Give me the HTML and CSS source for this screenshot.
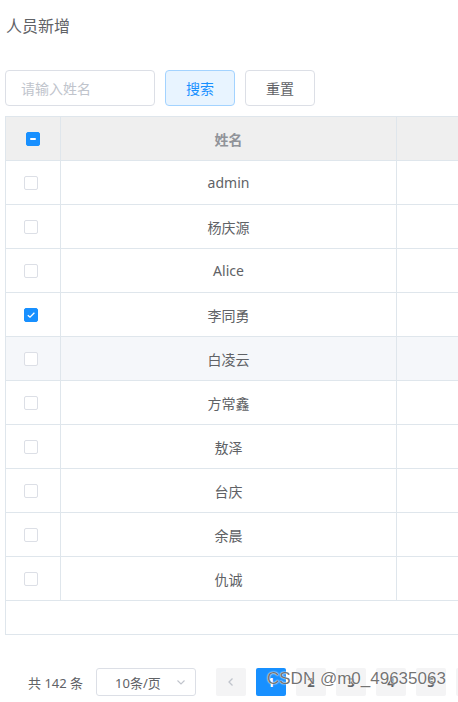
FILE: index.html
```html
<!DOCTYPE html>
<html lang="zh">
<head>
<meta charset="utf-8">
<title>人员新增</title>
<link rel="stylesheet" href="styles.css">
</head>
<body>
<div class="page">
  <div class="title">人员新增</div>
  <div class="search">
    <input class="input" type="text" placeholder="请输入姓名">
    <button class="btn btn-primary">搜索</button>
    <button class="btn">重置</button>
  </div>
  <div class="table">
    <div class="row head">
      <div class="cell c1"><span class="cb cb-ind"></span></div>
      <div class="cell c2">姓名</div>
      <div class="cell c3"></div>
    </div>
    <div class="row"><div class="cell c1"><span class="cb"></span></div><div class="cell c2">admin</div><div class="cell c3"></div></div>
    <div class="row"><div class="cell c1"><span class="cb"></span></div><div class="cell c2">杨庆源</div><div class="cell c3"></div></div>
    <div class="row"><div class="cell c1"><span class="cb"></span></div><div class="cell c2">Alice</div><div class="cell c3"></div></div>
    <div class="row"><div class="cell c1"><span class="cb cb-on"><svg viewBox="0 0 14 14" width="14" height="14"><path d="M3.8 7.2 L6 9.2 L10.4 4.8" fill="none" stroke="#fff" stroke-width="1.3"/></svg></span></div><div class="cell c2">李同勇</div><div class="cell c3"></div></div>
    <div class="row hover"><div class="cell c1"><span class="cb"></span></div><div class="cell c2">白凌云</div><div class="cell c3"></div></div>
    <div class="row"><div class="cell c1"><span class="cb"></span></div><div class="cell c2">方常鑫</div><div class="cell c3"></div></div>
    <div class="row"><div class="cell c1"><span class="cb"></span></div><div class="cell c2">敖泽</div><div class="cell c3"></div></div>
    <div class="row"><div class="cell c1"><span class="cb"></span></div><div class="cell c2">台庆</div><div class="cell c3"></div></div>
    <div class="row"><div class="cell c1"><span class="cb"></span></div><div class="cell c2">余晨</div><div class="cell c3"></div></div>
    <div class="row"><div class="cell c1"><span class="cb"></span></div><div class="cell c2">仇诚</div><div class="cell c3"></div></div>
    <div class="filler"></div>
  </div>
  <div class="pager">
    <span class="total">共 142 条</span>
    <div class="select">
      <span>10条/页</span>
      <svg class="arrow" viewBox="0 0 12 12" width="12" height="12"><path d="M2.5 4.5 L6 8 L9.5 4.5" fill="none" stroke="#c0c4cc" stroke-width="1.1"/></svg>
    </div>
    <button class="pg prev"><svg viewBox="0 0 12 12" width="12" height="12"><path d="M7.5 2.5 L4 6 L7.5 9.5" fill="none" stroke="#c0c4cc" stroke-width="1.3"/></svg></button>
    <button class="pg active">1</button>
    <button class="pg">2</button>
    <button class="pg">3</button>
    <button class="pg">4</button>
    <button class="pg">5</button>
    <button class="pg"></button>
    <span class="watermark">CSDN @m0_49635063</span>
  </div>
</div>
</body>
</html>
```
FILE: styles.css
```css
html, body {
  margin: 0;
  padding: 0;
  background: #fff;
  overflow: hidden;
}
body {
  font-family: "Noto Sans", "Noto Sans CJK SC", sans-serif;
  color: #606266;
}
.page {
  width: 700px;
  padding: 0 5px;
}
.title {
  height: 52px;
  line-height: 52px;
  font-size: 16px;
  color: #606266;
  padding-left: 1px;
}
.search {
  margin-top: 18px;
  display: flex;
  gap: 10px;
  height: 36px;
}
.input {
  box-sizing: border-box;
  width: 150px;
  height: 36px;
  border: 1px solid #dcdfe6;
  border-radius: 4px;
  padding: 0 15px;
  font-family: inherit;
  font-size: 14px;
  color: #606266;
  outline: none;
}
.input::placeholder {
  color: #c0c4cc;
}
.btn {
  box-sizing: border-box;
  width: 70px;
  height: 36px;
  border: 1px solid #dcdfe6;
  border-radius: 4px;
  background: #fff;
  font-family: inherit;
  font-size: 14px;
  color: #606266;
  padding: 0;
}
.btn-primary {
  background: #e8f4ff;
  border-color: #a3d3ff;
  color: #1890ff;
}
.table {
  margin-top: 10px;
  width: 640px;
  border: 1px solid #dfe6ec;
}
.row {
  display: flex;
  height: 44px;
  border-bottom: 1px solid #dfe6ec;
  box-sizing: border-box;
}
.row.head {
  background: #efefef;
  color: #909399;
  font-weight: bold;
}
.row.hover {
  background: #f5f7fa;
}
.cell {
  display: flex;
  align-items: center;
  justify-content: center;
  font-size: 14px;
  box-sizing: border-box;
}
.c1 {
  width: 55px;
  border-right: 1px solid #dfe6ec;
  padding-right: 4px;
}
.c2 {
  width: 336px;
  border-right: 1px solid #dfe6ec;
}
.c3 {
  flex: 1;
}
.head .c1 {
  padding-right: 0;
}
.cb {
  box-sizing: border-box;
  width: 14px;
  height: 14px;
  border: 1px solid #dcdfe6;
  border-radius: 2px;
  background: #fff;
  display: inline-flex;
  align-items: center;
  justify-content: center;
  position: relative;
}
.cb-on {
  background: #1890ff;
  border-color: #1890ff;
}
.cb-on svg {
  position: absolute;
  left: -1px;
  top: -1px;
}
.cb-ind {
  background: #1890ff;
  border-color: #1890ff;
}
.cb-ind::after {
  content: "";
  width: 6px;
  height: 2px;
  background: #fff;
  border-radius: 1px;
}
.filler {
  height: 33px;
}
.pager {
  position: relative;
  margin-top: 33px;
  display: flex;
  align-items: center;
  height: 28px;
  padding-left: 23px;
  font-size: 13px;
}
.total {
  color: #606266;
  margin-right: 13px;
  font-size: 13px;
}
.select {
  box-sizing: border-box;
  width: 100px;
  height: 28px;
  border: 1px solid #dcdfe6;
  border-radius: 3px;
  display: flex;
  align-items: center;
  padding: 0 8px 0 18px;
  justify-content: space-between;
  margin-right: 20px;
  color: #606266;
  font-size: 13px;
}
.pg {
  box-sizing: border-box;
  width: 30px;
  height: 28px;
  margin-right: 10px;
  flex: none;
  border: none;
  border-radius: 2px;
  background: #f4f4f5;
  color: #606266;
  font-family: inherit;
  font-size: 13px;
  font-weight: bold;
  padding: 0;
  display: flex;
  align-items: center;
  justify-content: center;
}
.pg.active {
  background: #1890ff;
  color: #fff;
}
.watermark {
  position: absolute;
  left: 262px;
  top: 1px;
  font-family: "Liberation Sans", Arial, sans-serif;
  font-size: 17px;
  color: rgba(90, 90, 90, 0.85);
  text-shadow: 0 0 2px #fff, 0 0 1px #fff;
  white-space: nowrap;
  pointer-events: none;
}
```
